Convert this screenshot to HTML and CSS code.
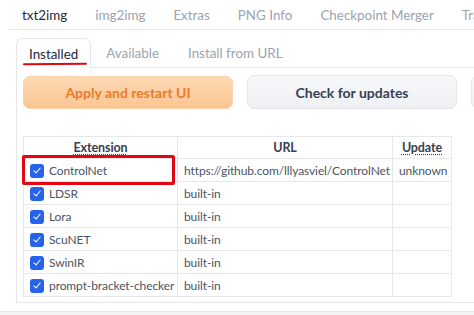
FILE: index.html
```html
<!DOCTYPE html>
<html lang="en">
<head>
    <meta charset="UTF-8">
    <meta name="viewport" content="width=device-width, initial-scale=1.0">
    <title>Extensions</title>
    <link rel="stylesheet" href="styles.css">
</head>
<body>
    <div class="topnav">
        <span class="tab active">txt2img</span>
        <span class="tab">img2img</span>
        <span class="tab">Extras</span>
        <span class="tab">PNG Info</span>
        <span class="tab">Checkpoint Merger</span>
        <span class="tab">Train</span>
    </div>

    <div class="ext">
        <div class="subtabs">
            <span class="subtab active">Installed<i class="mark-line"></i></span>
            <span class="subtab">Available</span>
            <span class="subtab">Install from URL</span>
            <span class="fill"></span>
        </div>
        <div class="panel">
            <div class="buttons">
                <button class="btn primary">Apply and restart UI</button>
                <button class="btn">Check for updates</button>
                <button class="btn"></button>
            </div>
            <div class="table-wrap">
                <table class="ext-table">
                    <colgroup>
                        <col class="col-name">
                        <col class="col-url">
                        <col class="col-upd">
                    </colgroup>
                    <tr>
                        <th><abbr>Extension</abbr></th>
                        <th>URL</th>
                        <th><abbr>Update</abbr></th>
                    </tr>
                    <tr>
                        <td><span class="chk"></span>ControlNet</td>
                        <td>https://github.com/lllyasviel/ControlNet</td>
                        <td>unknown</td>
                    </tr>
                    <tr><td><span class="chk"></span>LDSR</td><td>built-in</td><td></td></tr>
                    <tr><td><span class="chk"></span>Lora</td><td>built-in</td><td></td></tr>
                    <tr><td><span class="chk"></span>ScuNET</td><td>built-in</td><td></td></tr>
                    <tr><td><span class="chk"></span>SwinIR</td><td>built-in</td><td></td></tr>
                    <tr><td><span class="chk"></span>prompt-bracket-checker</td><td>built-in</td><td></td></tr>
                </table>
                <div class="mark-box"></div>
            </div>
        </div>
    </div>
    <div class="footer"></div>
</body>
</html>
```

FILE: styles.css
```css
body {
    margin: 0;
    width: 474px;
    overflow: hidden;
    font-family: Lato, "Noto Sans", sans-serif;
    background: white;
    color: #374151;
}
.topnav {
    display: flex;
    gap: 28px;
    padding-left: 22px;
    margin-left: 8px;
    height: 29px;
    border-bottom: 1px solid #e5e7eb;
    white-space: nowrap;
}
.topnav .tab {
    font-size: 13.4px;
    line-height: 31px;
    color: #9ca3af;
}
.topnav .tab.active { color: #1f2937; }
.topnav .tab:first-child { margin-left: -8px; }

.ext {
    margin-left: 16px;
    margin-top: 8px;
    width: 700px;
}
.subtabs {
    display: flex;
    height: 30px;
    white-space: nowrap;
}
.subtab {
    position: relative;
    font-size: 13.4px;
    line-height: 30px;
    color: #9ca3af;
    border-bottom: 1px solid #e5e7eb;
}
.subtab.active {
    color: #1f2937;
    padding: 0 12px;
    border: 1px solid #e5e7eb;
    border-bottom-color: white;
    border-radius: 6px 6px 0 0;
}
.subtab + .subtab { padding-left: 15px; padding-right: 14px; }
.fill { flex: 1; border-bottom: 1px solid #e5e7eb; }
.mark-line {
    position: absolute;
    left: 6px;
    top: 24px;
    width: 64px;
    height: 2px;
    background: #e30613;
    border-radius: 2px;
    transform: rotate(-0.6deg);
}

.panel {
    border-left: 1px solid #e5e7eb;
    border-bottom: 1px solid #e5e7eb;
    padding: 7px 0 5px 6px;
}
.buttons {
    display: flex;
    gap: 14px;
    align-items: center;
}
.btn {
    width: 210px;
    height: 34px;
    flex: none;
    font-family: inherit;
    font-size: 14px;
    font-weight: 700;
    color: #374151;
    background: linear-gradient(#f7f8fa, #eef0f3);
    border: 1px solid #e5e7eb;
    border-radius: 7px;
}
.btn.primary {
    height: 33px;
    color: #ea7b2c;
    background: linear-gradient(#fdd9b3, #fcc592);
    border-color: #fbd3ac;
}

.table-wrap {
    position: relative;
    margin-top: 27px;
}
.ext-table {
    border-collapse: collapse;
    table-layout: fixed;
    width: 428px;
    font-size: 12px;
    letter-spacing: -0.1px;
    color: #4b5563;
}
.ext-table th, .ext-table td {
    border: 1px solid #e5e7eb;
    height: 22px;
    padding: 0 6px;
    white-space: nowrap;
}
.ext-table th {
    color: #374151;
    font-size: 12.5px;
    font-weight: 700;
    height: 21px;
}
.ext-table abbr {
    text-decoration: underline dotted;
    text-underline-offset: 2px;
}
.col-name { width: 154px; }
.col-url { width: 215px; }
.col-upd { width: 59px; }
.chk {
    display: inline-block;
    width: 14px;
    height: 14px;
    margin: 0 5px 0 0;
    vertical-align: -3px;
    background: #2563eb;
    border-radius: 3px;
    position: relative;
}
.chk::after {
    content: "";
    position: absolute;
    left: 5px;
    top: 2px;
    width: 3px;
    height: 6px;
    border: solid white;
    border-width: 0 1.5px 1.5px 0;
    transform: rotate(40deg);
}
.mark-box {
    position: absolute;
    left: -1px;
    top: 19px;
    width: 147px;
    height: 24px;
    border: 3px solid #e30613;
    border-radius: 2px;
}
.footer {
    margin-top: 8px;
    height: 10px;
    border-top: 1px solid #e5e7eb;
    background: #f3f3f8;
}
```
